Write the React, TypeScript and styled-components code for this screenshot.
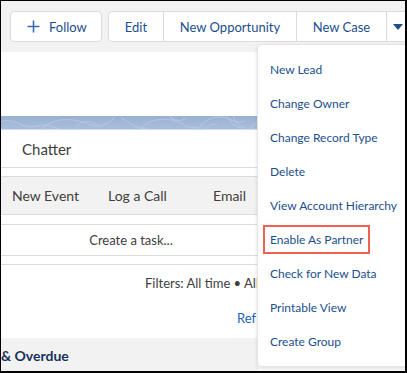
import React from 'react';
import styled, { createGlobalStyle } from 'styled-components';

const GlobalStyle = createGlobalStyle`
  html, body {
    margin: 0;
    padding: 0;
    background: #ffffff;
  }
  body {
    font-family: Lato, "Open Sans", "Liberation Sans", sans-serif;
    -webkit-font-smoothing: antialiased;
  }
`;

const Frame = styled.div`
  position: relative;
  width: 407px;
  height: 373px;
  box-sizing: border-box;
  border-style: solid;
  border-color: #000;
  border-width: 1px 2px 2px 1px;
  overflow: hidden;
  background: #fff;
`;

const Header = styled.div`
  height: 51px;
  box-sizing: border-box;
  padding: 10px 0 0 9px;
  background: #f3f2f2;
  display: flex;
  gap: 6px;
  white-space: nowrap;
`;

const FollowButton = styled.button`
  width: 92px;
  height: 31px;
  flex: none;
  box-sizing: border-box;
  display: flex;
  align-items: center;
  justify-content: flex-start;
  gap: 9px;
  padding: 0 0 0 16px;
  margin: 0;
  background: #fff;
  border: 1px solid #dddbda;
  border-radius: 4px;
  font-family: inherit;
  font-size: 13px;
  color: #1b4f8e;
  overflow: visible;
  cursor: pointer;
`;

const Group = styled.div`
  display: flex;
  flex: none;
  height: 31px;
  box-sizing: border-box;
  background: #fff;
  border: 1px solid #dddbda;
  border-radius: 4px;
`;

const GroupItem = styled.div<{ $w: number }>`
  display: flex;
  align-items: center;
  justify-content: center;
  flex: none;
  width: ${p => p.$w}px;
  font-size: 13px;
  color: #1b4f8e;
  & + & {
    border-left: 1px solid #dddbda;
  }
`;

const Spacer = styled.div<{ $h: number }>`
  height: ${p => p.$h}px;
`;

const Banner = styled.div`
  height: 13px;
  background: linear-gradient(#98b0d3, #a9bedc);
  border-bottom: 1px solid #d3dcea;
  overflow: hidden;
  svg {
    display: block;
  }
`;

const Main = styled.div`
  width: 257px;
  overflow: hidden;
  color: #3e3e3c;
`;

const TabRow = styled.div`
  height: 38px;
  box-sizing: border-box;
  display: flex;
  align-items: center;
  padding: 0 0 0 21px;
  font-size: 15px;
  border-bottom: 1px solid #dddbda;
`;

const ActionRow = styled.div`
  height: 39px;
  box-sizing: border-box;
  display: flex;
  align-items: center;
  background: #f3f2f2;
  border-top: 1px solid #dddbda;
  border-bottom: 1px solid #dddbda;
  font-size: 14px;
  white-space: nowrap;
`;

const Action = styled.span<{ $w: number }>`
  width: ${p => p.$w}px;
  flex: none;
`;

const TaskRow = styled.div`
  height: 32px;
  box-sizing: border-box;
  display: flex;
  align-items: center;
  justify-content: center;
  padding-left: 3px;
  border-top: 1px solid #dddbda;
  border-bottom: 1px solid #dddbda;
  font-size: 13px;
`;

const Line = styled.div`
  border-top: 1px solid #dddbda;
`;

const TextRow = styled.div<{ $h: number; $left: number; $blue?: boolean }>`
  height: ${p => p.$h}px;
  display: flex;
  align-items: center;
  padding-left: ${p => p.$left}px;
  font-size: 13px;
  white-space: nowrap;
  color: ${p => (p.$blue ? '#1b63b5' : '#3e3e3c')};
`;

const SectionBar = styled.div`
  height: 34px;
  display: flex;
  align-items: center;
  background: #f3f2f2;
  font-size: 14px;
  font-weight: 700;
  color: #16325c;
  white-space: nowrap;
`;

const Menu = styled.ul`
  position: absolute;
  top: 43px;
  left: 256px;
  width: 160px;
  margin: 0;
  padding: 7px 0 8px;
  list-style: none;
  background: #fff;
  border: 1px solid #e4e4e4;
  border-radius: 4px;
  box-shadow: 0 2px 4px rgba(0, 0, 0, 0.12);
`;

const MenuItem = styled.li`
  height: 34px;
  display: flex;
  align-items: center;
  padding-left: 12px;
  font-size: 12px;
  color: #1b4f8e;
  white-space: nowrap;
`;

const Highlight = styled.span`
  display: inline-block;
  margin-left: -7px;
  padding: 5px 5px;
  border: 2px solid #ef6150;
`;

const menuItems = [
  'New Lead',
  'Change Owner',
  'Change Record Type',
  'Delete',
  'View Account Hierarchy',
  'Enable As Partner',
  'Check for New Data',
  'Printable View',
  'Create Group',
];

export default function App() {
  return (
    <>
      <GlobalStyle />
      <Frame>
        <Header>
          <FollowButton>
            <svg width="13" height="13" viewBox="0 0 13 13">
              <path d="M6.5 0.5v12M0.5 6.5h12" stroke="#3a6db3" strokeWidth="1.6" />
            </svg>
            Follow
          </FollowButton>
          <Group>
            <GroupItem $w={54}>Edit</GroupItem>
            <GroupItem $w={132}>New Opportunity</GroupItem>
            <GroupItem $w={89}>New Case</GroupItem>
            <GroupItem $w={40}>
              <svg width="40" height="10" viewBox="0 0 40 10">
                <path d="M6 2h10l-5 6z" fill="#1b4f8e" />
              </svg>
            </GroupItem>
          </Group>
        </Header>

        <Spacer $h={64} />
        <Banner>
          <svg width="404" height="13" viewBox="0 0 404 13">
            <g fill="none" stroke="#c3d2e8" strokeWidth="0.8" opacity="0.8">
              <path d="M0 6c12-6 20 8 36 4s18 6 30 3" />
              <path d="M40 13c10-10 30-12 44-6s22 2 30-6" />
              <path d="M74 13c4-8 14-10 22-4" />
              <path d="M120 2c10 4 14 12 26 10" />
              <path d="M140 13c6-9 20-12 34-8s10 8 22 6" />
              <path d="M168 0c4 5 12 6 18 2" />
              <path d="M196 13c8-6 10-12 22-12s16 8 26 4" />
              <path d="M206 13c2-4 6-6 10-4" />
              <path d="M226 0c2 6 8 10 14 12M232 0c2 6 6 10 12 12" />
              <path d="M250 13c4-10 16-12 24-4" />
              <path d="M290 2c12 0 20 10 34 6s20-8 34-2 20 6 46 2" />
            </g>
          </svg>
        </Banner>

        <Main>
          <TabRow>Chatter</TabRow>
          <Spacer $h={8} />
          <ActionRow>
            <Action $w={11} />
            <Action $w={96}>New Event</Action>
            <Action $w={105}>Log a Call</Action>
            <Action $w={60}>Email</Action>
          </ActionRow>
          <Spacer $h={9} />
          <TaskRow>Create a task...</TaskRow>
          <Spacer $h={8} />
          <Line />
          <TextRow $h={35} $left={144}>Filters: All time • All</TextRow>
          <TextRow $h={36} $left={236} $blue>Ref</TextRow>
          <Spacer $h={2} />
          <SectionBar>&amp; Overdue</SectionBar>
        </Main>

        <Menu>
          {menuItems.map(item => (
            <MenuItem key={item}>
              {item === 'Enable As Partner' ? <Highlight>{item}</Highlight> : item}
            </MenuItem>
          ))}
        </Menu>
      </Frame>
    </>
  );
}
